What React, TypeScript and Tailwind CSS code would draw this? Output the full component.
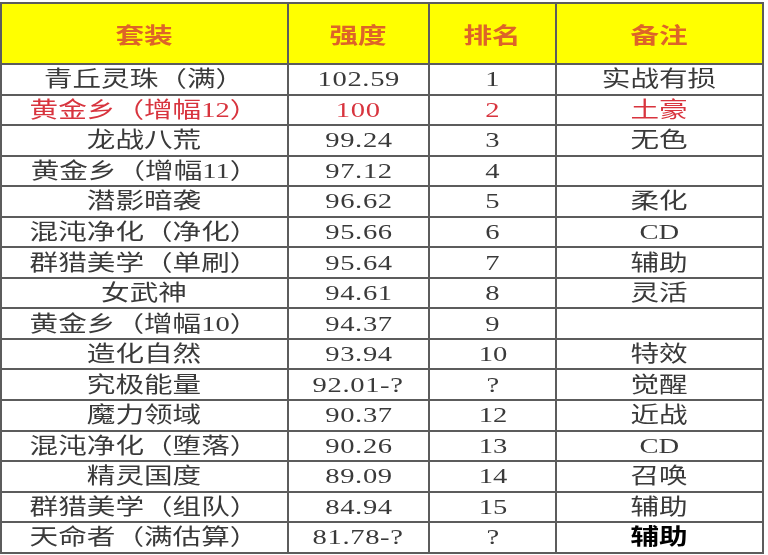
const rows: [string, string, string, string][] = [
  ["青丘灵珠（满）", "102.59", "1", "实战有损"],
  ["黄金乡（增幅12）", "100", "2", "土豪"],
  ["龙战八荒", "99.24", "3", "无色"],
  ["黄金乡（增幅11）", "97.12", "4", ""],
  ["潜影暗袭", "96.62", "5", "柔化"],
  ["混沌净化（净化）", "95.66", "6", "CD"],
  ["群猎美学（单刷）", "95.64", "7", "辅助"],
  ["女武神", "94.61", "8", "灵活"],
  ["黄金乡（增幅10）", "94.37", "9", ""],
  ["造化自然", "93.94", "10", "特效"],
  ["究极能量", "92.01-?", "?", "觉醒"],
  ["魔力领域", "90.37", "12", "近战"],
  ["混沌净化（堕落）", "90.26", "13", "CD"],
  ["精灵国度", "89.09", "14", "召唤"],
  ["群猎美学（组队）", "84.94", "15", "辅助"],
  ["天命者（满估算）", "81.78-?", "?", "辅助"],
];

const headers = ["套装", "强度", "排名", "备注"];

const cell =
  "flex items-center justify-center border-r-2 border-b-2 border-[#5c5c5c] overflow-hidden";

const App = () => {
  return (
    <div
      className="w-[768px] h-[555px] bg-white overflow-hidden pt-[2px]"
      style={{ fontFamily: '"Liberation Serif", "Noto Sans CJK SC", serif' }}
    >
      <div className="w-[764px] border-t-2 border-l-2 border-[#5c5c5c] grid grid-cols-[287px_141px_127px_207px]">
        {/* Header */}
        {headers.map((h) => (
          <div key={h} className={`${cell} h-[61px] bg-[#ffff00] pt-1`}>
            <span className="inline-block scale-x-[1.3] text-[22px] font-bold text-[#dd6428]">
              {h}
            </span>
          </div>
        ))}

        {/* Rows */}
        {rows.map((r, i) => {
          const red = i === 1;
          const color = red ? "text-[#d8343e]" : "text-[#3a3a3a]";
          return r.map((v, j) => (
            <div key={`${i}-${j}`} className={`${cell} h-[30.55px]`}>
              <span
                className={`inline-block scale-x-[1.3] text-[22px] leading-none ${color} ${
                  j === 1 ? "tracking-[0.5px]" : ""
                } ${i === 15 && j === 3 ? "text-black blur-[0.6px] font-bold" : ""}`}
              >
                {v}
              </span>
            </div>
          ));
        })}
      </div>
    </div>
  );
};

export default App;
